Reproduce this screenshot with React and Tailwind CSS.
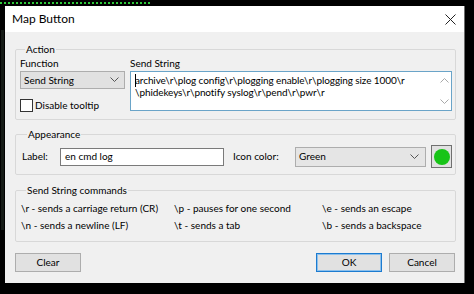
import React from "react";

const font = { fontFamily: 'Lato, "Liberation Sans", sans-serif' };

function Chevron({ className = "" }) {
  return (
    <svg width="9" height="6" viewBox="0 0 9 6" className={className}>
      <polyline points="0.5,0.5 4.5,4.5 8.5,0.5" fill="none" stroke="#555" strokeWidth="1" />
    </svg>
  );
}

function Group({ title, className = "", children }) {
  return (
    <fieldset className={`border border-[#d8d8d8] rounded-[2px] ${className}`}>
      <legend className="ml-[5px] px-[1px] leading-[14px] text-black">{title}</legend>
      {children}
    </fieldset>
  );
}

function Button({ children, primary }) {
  return (
    <div
      className={`w-[66px] h-[19px] flex items-center justify-center bg-[#e1e1e1] border ${
        primary ? "border-[#1c7bd0] shadow-[inset_0_0_0_1px_#8cc0ec]" : "border-[#adadad]"
      }`}
    >
      {children}
    </div>
  );
}

export default function App() {
  return (
    <div className="w-[474px] h-[294px] bg-black overflow-hidden relative text-[10px] text-black" style={font}>
      {/* terminal behind the dialog */}
      <div className="absolute left-0 top-[2px] w-[150px] border-t-2 border-dotted border-[#2ec93a]" />
      <div className="absolute left-[1px] top-[30px] w-[3px] h-[200px] bg-[#151a16]" />

      <div className="absolute left-[5px] top-[6px] w-[460px] h-[277px] flex flex-col border-r border-[#6d6d6d] overflow-hidden">
        {/* title bar */}
        <div className="h-[26px] shrink-0 bg-white flex items-center justify-between pl-[7px] pr-[7px]">
          <span className="text-[12px] leading-none">Map Button</span>
          <svg width="11" height="11" viewBox="0 0 11 11" className="mr-[1px]">
            <path d="M0.5 0.5 L10.5 10.5 M10.5 0.5 L0.5 10.5" stroke="#222" strokeWidth="1" />
          </svg>
        </div>

        {/* body */}
        <div className="flex-1 bg-[#f0f0f0] pl-[10px] pr-[8px] pt-[10px] flex flex-col">
          <Group title="Action" className="pl-[4px] pr-[3px] pb-[6px]">
            <div className="flex gap-[5px]">
              <div className="w-[105px] flex flex-col">
                <div className="h-[14px] leading-[14px]">Function</div>
                <div className="mt-[1px] h-[18px] bg-[#e1e1e1] border border-[#adadad] flex items-center justify-between pl-[3px] pr-[5px]">
                  <span>Send String</span>
                  <Chevron />
                </div>
                <div className="mt-[9px] flex items-center gap-[2px]">
                  <div className="w-[13px] h-[13px] bg-white border border-[#333]" />
                  <span>Disable tooltip</span>
                </div>
              </div>
              <div className="flex-1 flex flex-col">
                <div className="h-[14px] leading-[14px]">Send String</div>
                <div className="mt-[1px] h-[40px] bg-white border border-[#6aa4c8] flex">
                  <div className="flex-1 pl-[4px] pt-[2px] leading-[12px] relative whitespace-nowrap overflow-hidden tracking-[-0.1px]">
                    <span className="absolute left-[4px] top-[2px] w-px h-[13px] bg-black" />
                    <div>{"archive\\r\\plog config\\r\\plogging enable\\r\\plogging size 1000\\r"}</div>
                    <div>{"\\phidekeys\\r\\pnotify syslog\\r\\pend\\r\\pwr\\r"}</div>
                  </div>
                  <div className="w-[14px] flex flex-col items-center justify-between py-[5px]">
                    <Chevron className="rotate-180 opacity-50" />
                    <Chevron className="opacity-50" />
                  </div>
                </div>
              </div>
            </div>
          </Group>

          <Group title="Appearance" className="mt-[7px] pl-[6px] pr-[3px] pb-[6px]">
            <div className="flex items-center mt-[4px]">
              <span className="w-[38px]">Label:</span>
              <div className="w-[164px] h-[18px] bg-white border border-[#7a7a7a] flex items-center pl-[4px]">
                en cmd log
              </div>
              <span className="ml-[9px] w-[62px]">Icon color:</span>
              <div className="w-[131px] h-[20px] bg-[#e5e5e5] border border-[#adadad] flex items-center justify-between pl-[3px] pr-[6px]">
                <span>Green</span>
                <Chevron />
              </div>
              <div className="ml-[5px] w-[21px] h-[23px] border border-[#707070] bg-[#e1e1e1] flex items-center justify-center">
                <div className="w-[16px] h-[16px] rounded-full bg-[#17c417]" />
              </div>
            </div>
          </Group>

          <Group title="Send String commands" className="mt-[8px] pl-[5px] pb-[7px]">
            <div className="grid grid-cols-[153px_148px_1fr] leading-[17px] mt-[3px]">
              <span>{"\\r - sends a carriage return (CR)"}</span>
              <span>{"\\p - pauses for one second"}</span>
              <span>{"\\e - sends an escape"}</span>
              <span>{"\\n - sends a newline (LF)"}</span>
              <span>{"\\t - sends a tab"}</span>
              <span>{"\\b - sends a backspace"}</span>
            </div>
          </Group>

          <div className="mt-[11px] flex items-center">
            <Button>Clear</Button>
            <div className="flex-1" />
            <Button primary>OK</Button>
            <div className="w-[7px]" />
            <Button>Cancel</Button>
            <div className="w-[1px]" />
          </div>
        </div>
      </div>
    </div>
  );
}
